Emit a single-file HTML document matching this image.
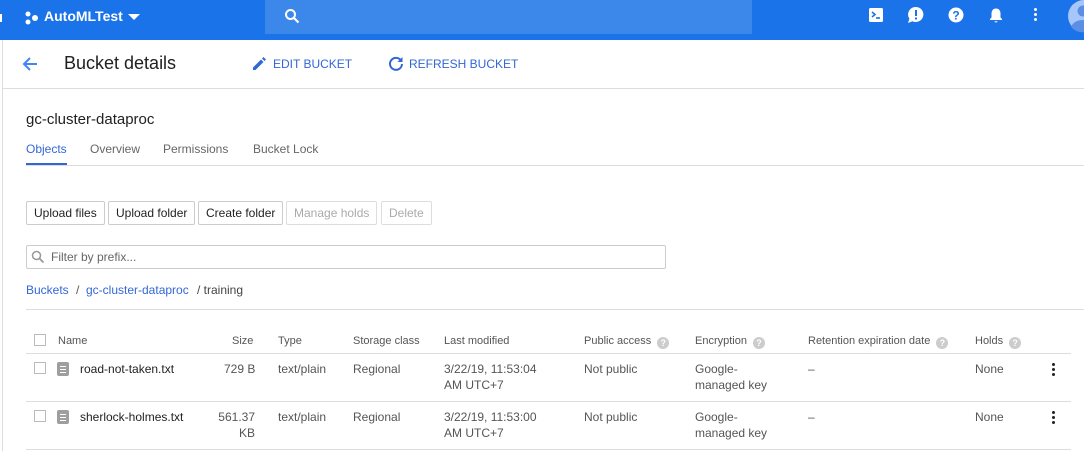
<!DOCTYPE html>
<html><head><meta charset="utf-8"><style>
*{margin:0;padding:0;box-sizing:border-box}
body{width:1084px;height:451px;overflow:hidden;background:#fff;font-family:"Liberation Sans",Arial,sans-serif;font-size:12px;color:#333;position:relative}
.a{position:absolute;white-space:nowrap}
.top{left:0;top:0;width:1084px;height:40px;background:#1a73e8}
.btn{position:absolute;top:201px;height:24px;border:1px solid #ccc;border-radius:2px;font-size:12px;line-height:22px;padding:0 7px;color:#222;background:#fff}
.dis{color:#aaa;border-color:#ddd}
.hl{position:absolute;height:1px;background:#ddd}
.th{position:absolute;top:335px;color:#555;font-size:11px}
.td{position:absolute;color:#555;font-size:12px;line-height:16px}
.cb{position:absolute;width:12px;height:12px;border:1px solid #bbb;background:#fff}
.q{display:inline-block;width:12px;height:12px;border-radius:50%;background:#ccc;color:#fff;font-size:9px;line-height:12px;text-align:center;margin-left:6px;vertical-align:-2px;font-weight:bold}
.fi{position:absolute;width:12px;height:14px;background:#9e9e9e;border-radius:2px}
.fi i{position:absolute;left:3px;width:6px;height:1px;background:#fff}
.dots{position:absolute;width:3px}
.dots i{display:block;width:3px;height:3px;border-radius:50%;background:#222;margin-bottom:2px}
</style></head><body>
<div class="a top"></div>
<div class="a" style="left:0;top:14px;width:2px;height:8px;background:#fff"></div>
<svg class="a" style="left:24px;top:10px" width="16" height="16" viewBox="0 0 16 16"><circle cx="4" cy="4" r="2.5" fill="#fff"/><circle cx="4" cy="12" r="2.5" fill="#fff"/><circle cx="11" cy="8" r="3" fill="#fff"/></svg>
<div class="a" style="left:44px;top:7px;color:#fff;font-size:14px;font-weight:bold;line-height:18px">AutoMLTest</div>
<svg class="a" style="left:128px;top:13px" width="12" height="8"><path d="M0 1h12L6 7z" fill="#fff"/></svg>
<div class="a" style="left:265px;top:0;width:487px;height:34px;background:#3b87ea"></div>
<svg class="a" style="left:284px;top:8px" width="16" height="16" viewBox="0 0 16 16"><circle cx="6.5" cy="6.5" r="4.5" stroke="#fff" stroke-width="2" fill="none"/><path d="M10 10l4.5 4.5" stroke="#fff" stroke-width="2.2"/></svg>
<svg class="a" style="left:868px;top:7px" width="16" height="16" viewBox="0 0 16 16"><rect x="1" y="1" width="14" height="14" rx="1.5" fill="#fff"/><path d="M4 5l3 2.5L4 10" stroke="#1a73e8" stroke-width="1.6" fill="none"/><path d="M8 11h4" stroke="#1a73e8" stroke-width="1.6"/></svg>
<svg class="a" style="left:907px;top:6px" width="18" height="18" viewBox="0 0 18 18"><path d="M9 1a7.5 7.5 0 1 1-3.5 14.2L1 17l1.4-4.3A7.5 7.5 0 0 1 9 1z" fill="#fff"/><rect x="8" y="4" width="2" height="6" fill="#1a73e8"/><rect x="8" y="11.5" width="2" height="2" fill="#1a73e8"/></svg>
<svg class="a" style="left:948px;top:7px" width="16" height="16" viewBox="0 0 16 16"><circle cx="8" cy="8" r="7.5" fill="#fff"/><text x="8" y="12.5" font-size="12" font-weight="bold" text-anchor="middle" fill="#1a73e8" font-family="Liberation Sans">?</text></svg>
<svg class="a" style="left:988px;top:7px" width="16" height="17" viewBox="0 0 16 17"><path d="M8 1.5c-3 0-4.5 2.4-4.5 5v4L2 12v1h12v-1l-1.5-1.5v-4c0-2.6-1.5-5-4.5-5z" fill="#fff"/><path d="M6.3 14.3a1.8 1.8 0 0 0 3.4 0z" fill="#fff"/></svg>
<div class="dots" style="left:1034px;top:8px"><i style="background:#fff"></i><i style="background:#fff"></i><i style="background:#fff"></i></div>
<svg class="a" style="left:1060px;top:0" width="24" height="33" viewBox="0 0 24 33"><circle cx="24" cy="16" r="16" fill="#a7c7fa"/><circle cx="23" cy="11" r="5.5" fill="#5b8fe6"/><path d="M11 27c2-5 7-7 12-7s10 2 12 7a16 16 0 0 1-24 0z" fill="#5b8fe6"/></svg>
<div class="a" style="left:2px;top:40px;width:1px;height:411px;background:#ddd"></div>
<svg class="a" style="left:21px;top:55px" width="18" height="18" viewBox="0 0 18 18"><path d="M16 9H3M9 3L3 9l6 6" stroke="#4285f4" stroke-width="2" fill="none"/></svg>
<div class="a" style="left:64px;top:53px;font-size:18px;color:#212121">Bucket details</div>
<svg class="a" style="left:252px;top:56px" width="15" height="15" viewBox="0 0 15 15"><path d="M1 11.5V14h2.5l8-8L9 3.5zM12.5 5L14 3.5 11.5 1 10 2.5z" fill="#3367d6"/></svg>
<div class="a" style="left:273px;top:57px;color:#3367d6;font-size:12px">EDIT BUCKET</div>
<svg class="a" style="left:388px;top:56px" width="16" height="16" viewBox="0 0 16 16"><path d="M13 4.5A6 6 0 1 0 14 8" stroke="#3367d6" stroke-width="2" fill="none"/><path d="M14.5 1v5h-5z" fill="#3367d6"/></svg>
<div class="a" style="left:409px;top:57px;color:#3367d6;font-size:12px">REFRESH BUCKET</div>
<div class="hl" style="left:3px;top:88px;width:1081px"></div>
<div class="a" style="left:26px;top:111px;font-size:15px;color:#212121">gc-cluster-dataproc</div>
<div class="a" style="left:26px;top:142px;color:#3367d6">Objects</div>
<div class="a" style="left:90px;top:142px;color:#666">Overview</div>
<div class="a" style="left:163px;top:142px;color:#666">Permissions</div>
<div class="a" style="left:253px;top:142px;color:#666">Bucket Lock</div>
<div class="a" style="left:26px;top:163px;width:41px;height:2px;background:#3367d6"></div>
<div class="hl" style="left:26px;top:165px;width:1058px"></div>
<div class="btn" style="left:26px">Upload files</div>
<div class="btn" style="left:108px">Upload folder</div>
<div class="btn" style="left:198px">Create folder</div>
<div class="btn dis" style="left:286px">Manage holds</div>
<div class="btn dis" style="left:381px">Delete</div>
<div class="a" style="left:26px;top:245px;width:640px;height:24px;border:1px solid #ccc;border-radius:2px"></div>
<svg class="a" style="left:31px;top:250px" width="14" height="14" viewBox="0 0 14 14"><circle cx="5.5" cy="5.5" r="4" stroke="#999" stroke-width="1.5" fill="none"/><path d="M8.5 8.5l4 4" stroke="#999" stroke-width="1.8"/></svg>
<div class="a" style="left:51px;top:250px;color:#666">Filter by prefix...</div>
<div class="a" style="left:26px;top:283px;color:#3367d6">Buckets</div>
<div class="a" style="left:76px;top:283px;color:#555">/</div>
<div class="a" style="left:86px;top:283px;color:#3367d6">gc-cluster-dataproc</div>
<div class="a" style="left:197px;top:283px;color:#444">/ training</div>
<div class="hl" style="left:26px;top:309px;width:1058px"></div>
<div class="cb" style="left:34px;top:334px"></div>
<div class="th" style="left:58px">Name</div>
<div class="th" style="left:232px">Size</div>
<div class="th" style="left:278px">Type</div>
<div class="th" style="left:353px">Storage class</div>
<div class="th" style="left:444px">Last modified</div>
<div class="th" style="left:584px">Public access<span class="q">?</span></div>
<div class="th" style="left:695px">Encryption<span class="q">?</span></div>
<div class="th" style="left:808px">Retention expiration date<span class="q">?</span></div>
<div class="th" style="left:975px">Holds<span class="q">?</span></div>
<div class="hl" style="left:26px;top:353px;width:1045px"></div>
<div class="hl" style="left:26px;top:401px;width:1045px"></div>
<div class="hl" style="left:26px;top:449px;width:1045px"></div>

<div class="cb" style="left:34px;top:362px"></div>
<div class="fi" style="left:57px;top:362px"><i style="top:4px"></i><i style="top:7px"></i><i style="top:10px"></i></div>
<div class="td" style="left:80px;top:361px;color:#222">road-not-taken.txt</div>
<div class="td" style="left:224px;top:361px">729 B</div>
<div class="td" style="left:278px;top:361px">text/plain</div>
<div class="td" style="left:353px;top:361px">Regional</div>
<div class="td" style="left:444px;top:361px">3/22/19, 11:53:04<br>AM UTC+7</div>
<div class="td" style="left:584px;top:361px">Not public</div>
<div class="td" style="left:695px;top:361px">Google-<br>managed key</div>
<div class="td" style="left:808px;top:361px">–</div>
<div class="td" style="left:975px;top:361px">None</div>
<div class="dots" style="left:1052px;top:363px"><i></i><i></i><i></i></div>

<div class="cb" style="left:34px;top:410px"></div>
<div class="fi" style="left:57px;top:410px"><i style="top:4px"></i><i style="top:7px"></i><i style="top:10px"></i></div>
<div class="td" style="left:80px;top:409px;color:#222">sherlock-holmes.txt</div>
<div class="td" style="left:218px;top:409px;text-align:right;width:37px">561.37<br>KB</div>
<div class="td" style="left:278px;top:409px">text/plain</div>
<div class="td" style="left:353px;top:409px">Regional</div>
<div class="td" style="left:444px;top:409px">3/22/19, 11:53:00<br>AM UTC+7</div>
<div class="td" style="left:584px;top:409px">Not public</div>
<div class="td" style="left:695px;top:409px">Google-<br>managed key</div>
<div class="td" style="left:808px;top:409px">–</div>
<div class="td" style="left:975px;top:409px">None</div>
<div class="dots" style="left:1052px;top:411px"><i></i><i></i><i></i></div>
</body></html>
